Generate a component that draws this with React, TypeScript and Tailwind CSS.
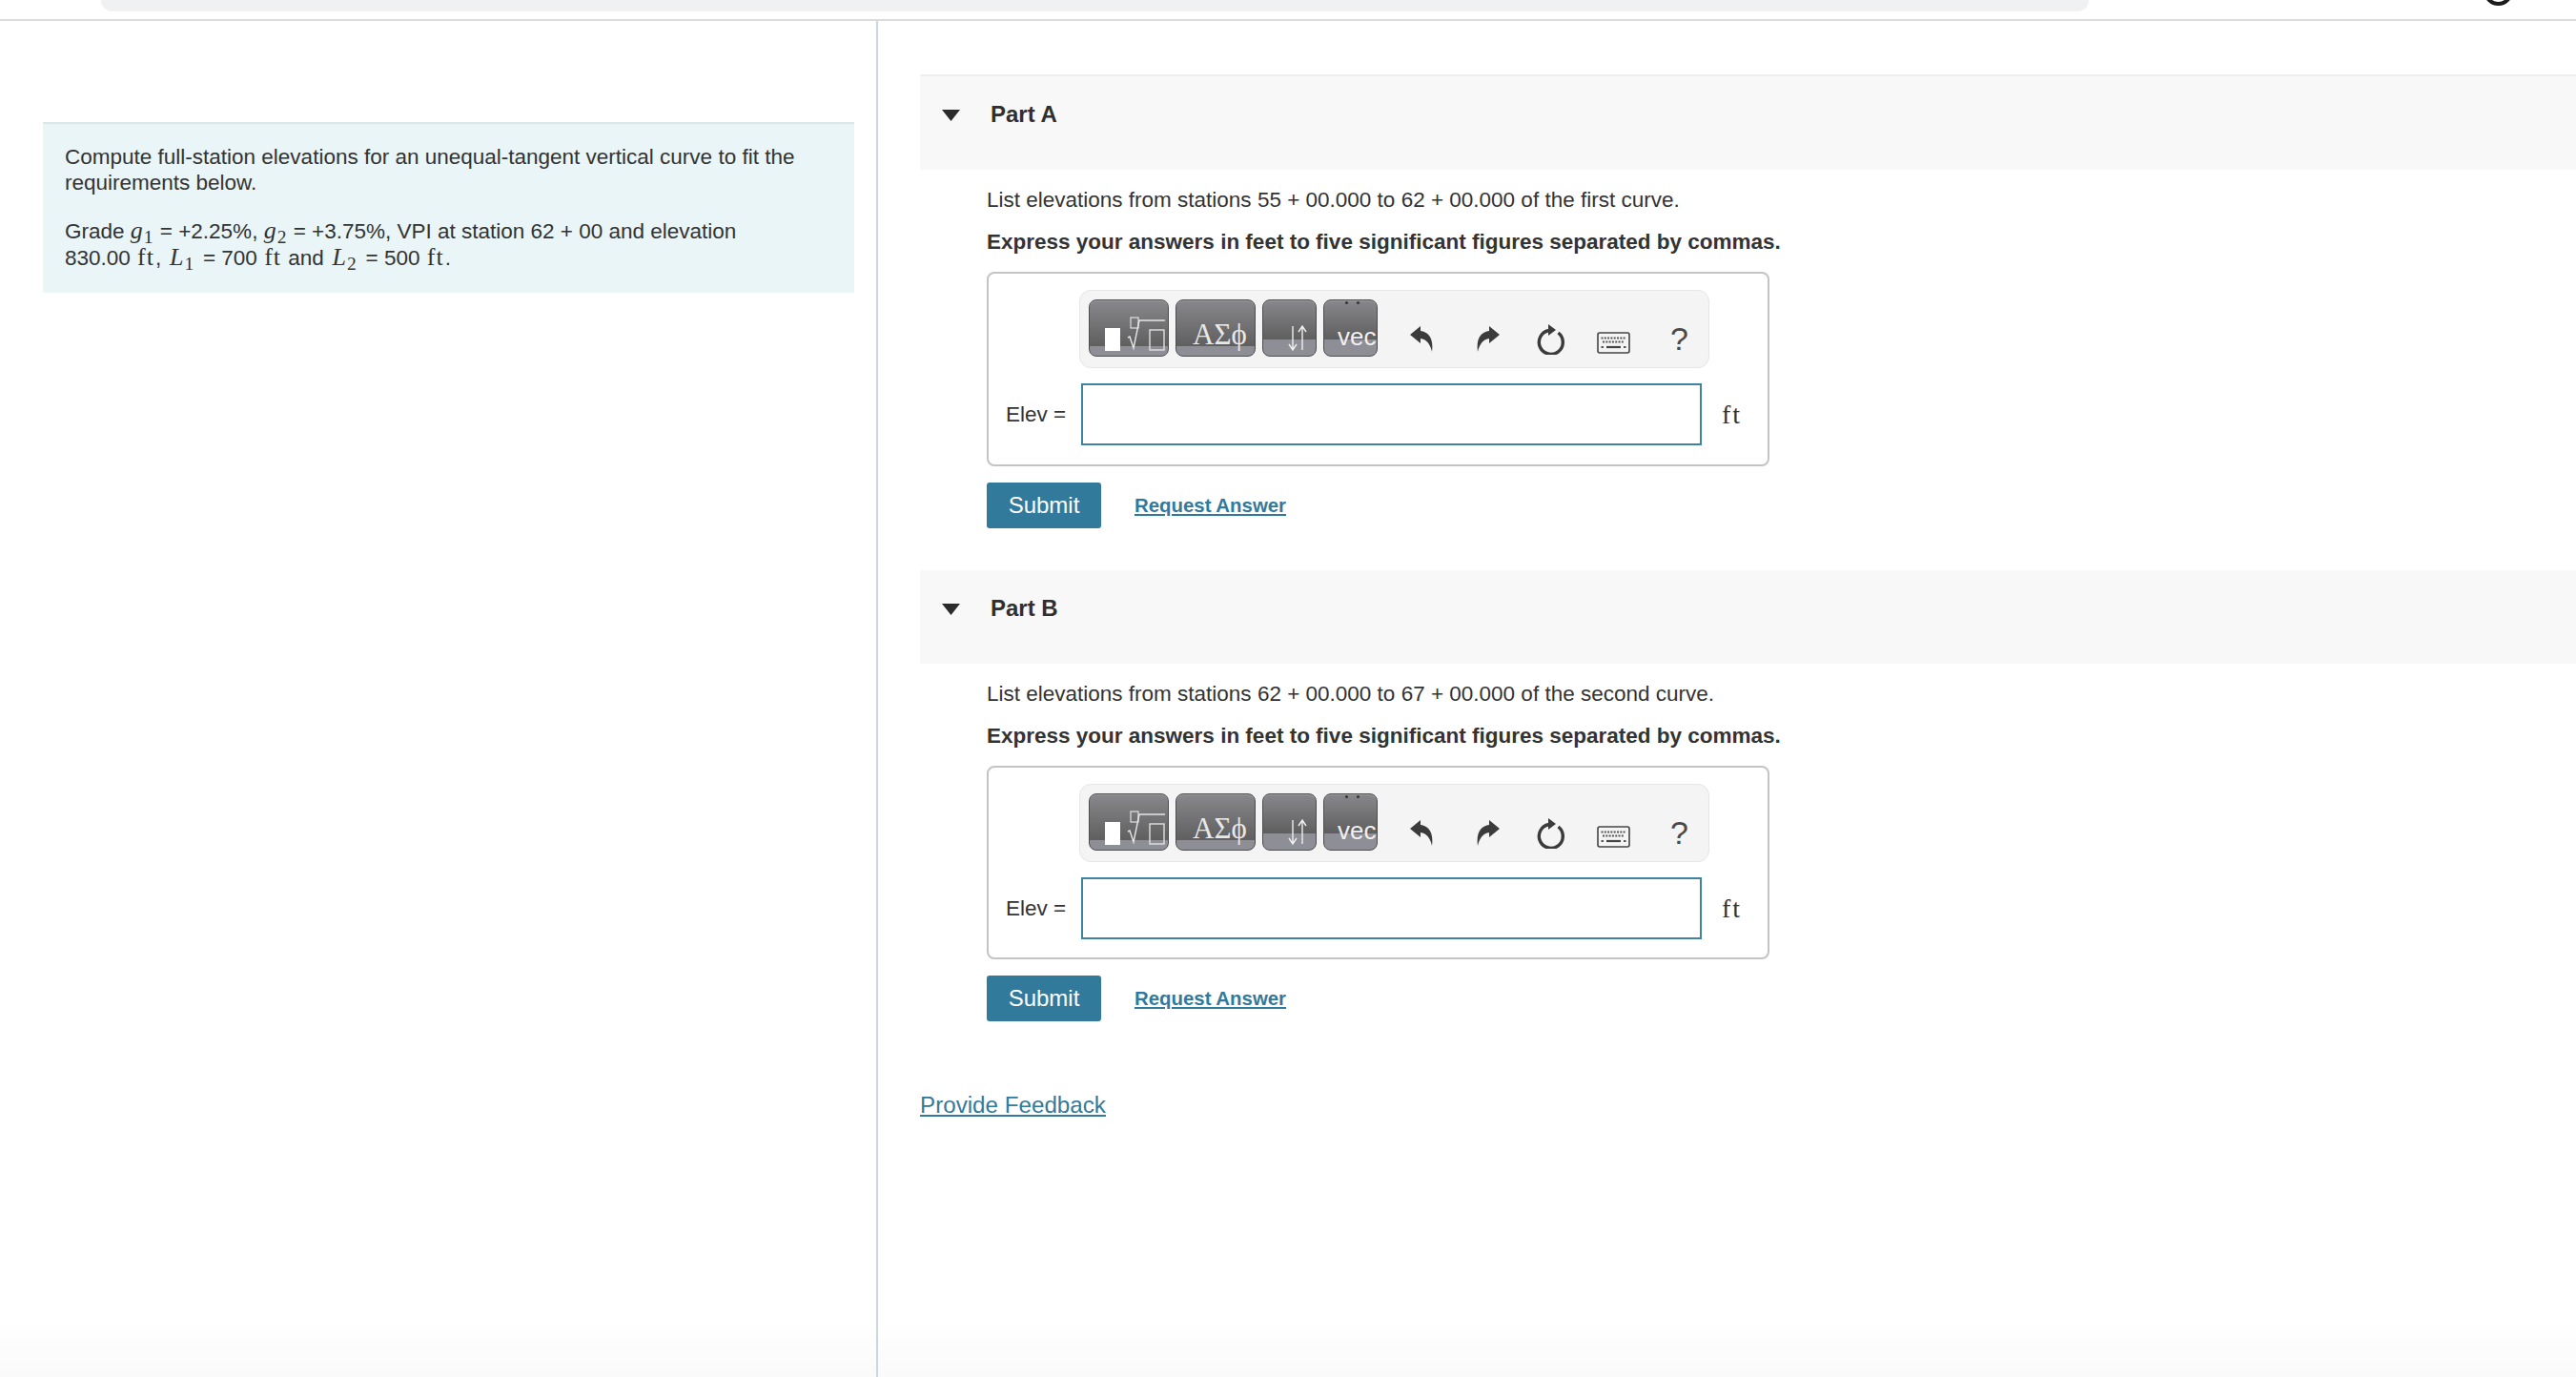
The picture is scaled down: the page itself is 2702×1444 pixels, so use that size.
const sans = "font-['Liberation_Sans',Arial,sans-serif]";
const serif = "font-['Liberation_Serif','Times_New_Roman',serif]";

function ToolButton({ width, split, children }: { width: string; split: string; children: React.ReactNode }) {
  return (
    <div className={`relative h-[60px] overflow-hidden rounded-lg border border-[#4d4d4d] shadow-[inset_0_1px_0_#9a9a9e] ${width} ${split}`}>
      {children}
    </div>
  );
}

function TemplateIcon() {
  return (
    <svg width="84" height="60" viewBox="0 0 84 60" className="absolute -left-px -top-px">
      <rect x="17" y="30" width="16" height="24" fill="#fff" />
      <rect x="44" y="19" width="8" height="11" fill="none" stroke="#e0e0e0" strokeWidth="1.2" />
      <path d="M41 40 L43 39 L47 51 L53 22 H80" fill="none" stroke="#e6e6e6" strokeWidth="1.4" />
      <rect x="64" y="32" width="15" height="21" fill="none" stroke="#e0e0e0" strokeWidth="1.4" />
    </svg>
  );
}

function ArrowsIcon() {
  return (
    <svg width="57" height="60" viewBox="0 0 57 60" className="absolute -left-px -top-px">
      <path d="M32 28 V53 M28 47 L32 53 L36 47" fill="none" stroke="#f0f0f0" strokeWidth="1.4" />
      <path d="M42 53 V28 M38 34 L42 28 L46 34" fill="none" stroke="#f0f0f0" strokeWidth="1.4" />
    </svg>
  );
}

function UndoIcon({ flip }: { flip?: boolean }) {
  return (
    <svg width="24" height="27" viewBox="0 0 24 27" className={flip ? "-scale-x-100" : ""}>
      <path d="M0 9 L11 0 V5 C19 6 25 12 23 27 C21 18 17 14 11 13 V18 Z" fill="#3b3b3b" />
    </svg>
  );
}

function RefreshIcon() {
  return (
    <svg width="30" height="33" viewBox="0 0 30 33">
      <path d="M14 7.5 A12.5 12.5 0 1 0 23.5 10" fill="none" stroke="#3b3b3b" strokeWidth="3.4" />
      <path d="M13 1 L21 7 L13 13 Z" fill="#3b3b3b" />
    </svg>
  );
}

function KeyboardIcon() {
  return (
    <svg width="35" height="23" viewBox="0 0 35 23">
      <rect x="1" y="1" width="33" height="21" rx="2" fill="#f4f4f4" stroke="#444" strokeWidth="1.6" />
      <path d="M4.5 6.5 H30.5 M6 10.5 H29" stroke="#555" strokeWidth="2.2" strokeDasharray="2 1.3" fill="none" />
      <path d="M10 16 H25" stroke="#444" strokeWidth="2.2" fill="none" />
      <path d="M4.5 16 H7 M28 16 H30.5" stroke="#555" strokeWidth="2.2" fill="none" />
    </svg>
  );
}

function Toolbar() {
  return (
    <div className="ml-[95px] flex h-[82px] w-[661px] items-start rounded-xl border border-[#e6e6e6] bg-[#f4f4f4] pl-[9px] pt-[9px]">
      <div className="flex gap-[7px]">
        <ToolButton width="w-[84px]" split="bg-[linear-gradient(#88888c,#5f5f60_83%,#8e8e96_83%)]">
          <TemplateIcon />
        </ToolButton>
        <ToolButton width="w-[84px]" split="bg-[linear-gradient(#88888c,#5f5f60_83%,#8e8e96_83%)]">
          <span className={`absolute left-[17px] top-[18px] text-[31px] leading-[36px] text-[#e8e8e8] ${serif}`}>ΑΣϕ</span>
        </ToolButton>
        <ToolButton width="w-[57px]" split="bg-[linear-gradient(#88888c,#5f5f60_70%,#8e8e96_70%)]">
          <ArrowsIcon />
        </ToolButton>
        <ToolButton width="w-[57px]" split="bg-[linear-gradient(#88888c,#5f5f60_70%,#8e8e96_70%)]">
          <span className="absolute left-[14px] top-[20px] text-[26px] leading-[36px] text-[#f0f0f0]">vec</span>
          <span className="absolute left-[22px] top-[1px] h-[3px] w-[3px] rounded-full bg-[#333]" />
          <span className="absolute left-[34px] top-[1px] h-[3px] w-[3px] rounded-full bg-[#333]" />
        </ToolButton>
      </div>
      <div className="ml-[34px] mt-[28px]"><UndoIcon /></div>
      <div className="ml-[46px] mt-[28px]"><UndoIcon flip /></div>
      <div className="ml-[38px] mt-[25px]"><RefreshIcon /></div>
      <div className="ml-[34px] mt-[34px]"><KeyboardIcon /></div>
      <div className="ml-[42px] mt-[19px] text-[34px] leading-[44px] text-[#4a4a4a]">?</div>
    </div>
  );
}

function Part({ title, list, top, headerH, boxH }: { title: string; list: string; top: string; headerH: string; boxH: string }) {
  return (
    <section>
      <div className={`flex items-start bg-[#f8f8f8] pl-[23px] pt-[26px] ${headerH} ${top}`}>
        <svg width="19" height="12" viewBox="0 0 19 12" className="mt-[9px]">
          <path d="M0 0 H19 L9.5 12 Z" fill="#2b2b2b" />
        </svg>
        <h2 className="ml-[32px] text-[24px] font-bold leading-[28px] text-[#2f2f2f]">{title}</h2>
      </div>
      <div className="pl-[70px]">
        <p className="mt-[18px] text-[22.5px] leading-[28px]">{list}</p>
        <p className="mt-[16px] text-[22.5px] font-bold leading-[28px]">
          Express your answers in feet to five significant figures separated by commas.
        </p>
        <div className={`mt-[17px] w-[821px] rounded-lg border-2 border-[#c4c4c4] pt-[17px] ${boxH}`}>
          <Toolbar />
          <div className="mt-[16px] flex items-center">
            <span className="ml-[18px] w-[79px] text-[22.5px] leading-[28px]">Elev =</span>
            <div className="h-[65px] w-[651px] border-2 border-[#3f83a3] bg-white" />
            <span className={`ml-[21px] text-[28px] leading-[30px] tracking-[2px] ${serif}`}>ft</span>
          </div>
        </div>
        <div className="mt-[17px] flex items-center">
          <button className="h-[48px] w-[120px] rounded-[3px] bg-[#327a9b] text-[24px] text-white">Submit</button>
          <a className="ml-[35px] text-[20.4px] font-bold text-[#327a9b] underline">Request Answer</a>
        </div>
      </div>
    </section>
  );
}

function M({ gap, children }: { gap?: string; children: React.ReactNode }) {
  return <span className={`text-[26px] tracking-[1px] ${gap ?? ""} ${serif}`}>{children}</span>;
}

export default function App() {
  return (
    <div className={`relative flex h-[1444px] w-[2702px] flex-col overflow-hidden bg-white text-[#333] ${sans}`}>
      <header className="flex h-[22px] shrink-0 items-start border-b-2 border-[#dcdcdc] pl-[106px]">
        <div className="h-[12px] w-[2085px] rounded-b-[24px] bg-[#f0f1f3]" />
        <div className="ml-[414px] h-[6px] w-[31px] overflow-hidden">
          <div className="-mt-[25px] h-[31px] w-[31px] rounded-full border-[4px] border-[#1c1c1c]" />
        </div>
      </header>

      <main className="flex flex-1">
        <aside className="relative z-10 w-[921px] shrink-0 border-r-2 border-[#cdd5df] pl-[45px] pt-[106px]">
          <div className="h-[179px] w-[851px] border-t-2 border-[#dbe6e8] bg-[#e9f5f7] pl-[23px] pr-[24px] pt-[21px] text-[22.5px] leading-[27px]">
            <p>Compute full-station elevations for an unequal-tangent vertical curve to fit the requirements below.</p>
            <p className="mt-[23px]">
              Grade <M><i>g</i><sub>1</sub></M> = +2.25%, <M><i>g</i><sub>2</sub></M> = +3.75%, VPI at station 62 + 00 and elevation
              <br />
              830.00 <M gap="mx-[1px]">ft</M>, <M gap="mx-[2.5px]"><i>L</i><sub>1</sub></M> = 700 <M gap="mx-[1px]">ft</M> and <M gap="mx-[2.5px]"><i>L</i><sub>2</sub></M> = 500 <M gap="mx-[1px]">ft</M>.
            </p>
          </div>
        </aside>

        <div className="min-w-0 flex-1 pl-[44px] pt-[56px]">
          <Part
            title="Part A"
            list="List elevations from stations 55 + 00.000 to 62 + 00.000 of the first curve."
            top="border-t-2 border-[#eeeeee]"
            headerH="h-[100px]"
            boxH="h-[204px]"
          />
          <div className="mt-[44px]">
            <Part
              title="Part B"
              list="List elevations from stations 62 + 00.000 to 67 + 00.000 of the second curve."
              top=""
              headerH="h-[98px]"
              boxH="h-[203px]"
            />
          </div>
          <a className="mt-[73px] block text-[24.2px] leading-[30px] text-[#327a9b] underline">Provide Feedback</a>
        </div>
      </main>

      <div className="pointer-events-none absolute bottom-0 left-0 h-[60px] w-full bg-gradient-to-b from-transparent to-[#fafafa]" />
    </div>
  );
}
